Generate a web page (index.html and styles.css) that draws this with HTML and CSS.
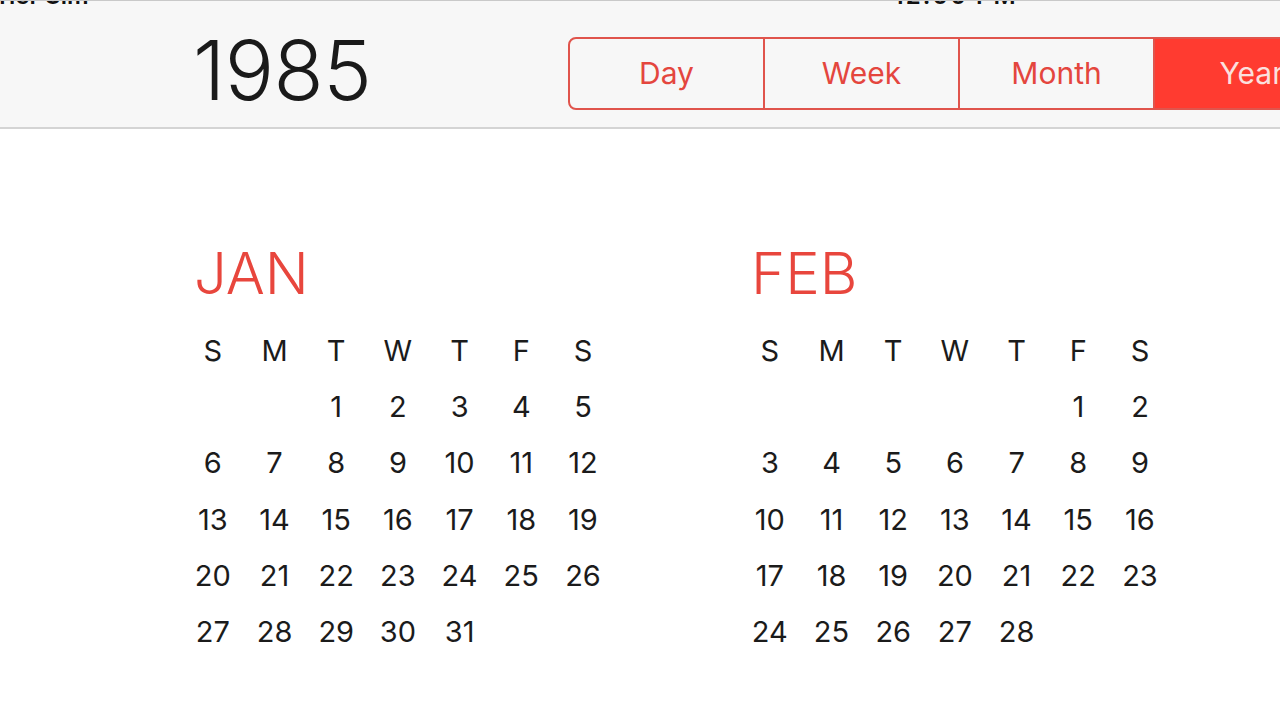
FILE: index.html
```html
<!DOCTYPE html>
<html>
<head>
<meta charset="utf-8">
<link rel="stylesheet" href="styles.css">
</head>
<body>
<div class="screen">
  <header class="topbar">
    <div class="status">
      <span class="status-left">Carrier Sim</span>
      <span class="status-time">12:00 PM</span>
    </div>
    <div class="toolbar">
      <div class="year">1985</div>
      <div class="segmented">
        <div class="seg">Day</div>
        <div class="seg">Week</div>
        <div class="seg">Month</div>
        <div class="seg active">Year</div>
      </div>
    </div>
  </header>
  <main class="months">
    <section class="month">
      <h2 class="month-name">JAN</h2>
      <div class="grid">
        <span class="wd">S</span><span class="wd">M</span><span class="wd">T</span><span class="wd">W</span><span class="wd">T</span><span class="wd">F</span><span class="wd">S</span>
        <span></span><span></span><span>1</span><span>2</span><span>3</span><span>4</span><span>5</span>
        <span>6</span><span>7</span><span>8</span><span>9</span><span>10</span><span>11</span><span>12</span>
        <span>13</span><span>14</span><span>15</span><span>16</span><span>17</span><span>18</span><span>19</span>
        <span>20</span><span>21</span><span>22</span><span>23</span><span>24</span><span>25</span><span>26</span>
        <span>27</span><span>28</span><span>29</span><span>30</span><span>31</span>
      </div>
    </section>
    <section class="month">
      <h2 class="month-name">FEB</h2>
      <div class="grid">
        <span class="wd">S</span><span class="wd">M</span><span class="wd">T</span><span class="wd">W</span><span class="wd">T</span><span class="wd">F</span><span class="wd">S</span>
        <span></span><span></span><span></span><span></span><span></span><span>1</span><span>2</span>
        <span>3</span><span>4</span><span>5</span><span>6</span><span>7</span><span>8</span><span>9</span>
        <span>10</span><span>11</span><span>12</span><span>13</span><span>14</span><span>15</span><span>16</span>
        <span>17</span><span>18</span><span>19</span><span>20</span><span>21</span><span>22</span><span>23</span>
        <span>24</span><span>25</span><span>26</span><span>27</span><span>28</span>
      </div>
    </section>
  </main>
</div>
</body>
</html>
```

FILE: styles.css
```css
html, body {
  margin: 0;
  padding: 0;
  background: #ffffff;
}

body {
  font-family: Inter, "Noto Sans", "Liberation Sans", sans-serif;
  color: #161616;
  overflow: hidden;
}

.screen {
  width: 1280px;
  height: 720px;
  overflow: hidden;
}

.topbar {
  background: #f7f7f7;
  border-top: 1px solid #c9c9c9;
  border-bottom: 2px solid #d4d4d4;
  box-sizing: border-box;
  height: 129px;
}

.status {
  height: 4px;
  display: flex;
  align-items: flex-end;
  overflow: hidden;
}

.status-left,
.status-time {
  font-size: 24px;
  font-weight: 600;
  line-height: 24px;
  margin-bottom: -3px;
  color: #111;
  white-space: nowrap;
  flex: none;
}

.status-left {
  margin-left: -42px;
}

.status-time {
  margin-left: 805px;
  letter-spacing: 2px;
}

.toolbar {
  display: flex;
  align-items: center;
  height: 122px;
  padding-left: 193px;
}

.year {
  font-size: 82px;
  font-weight: 300;
  letter-spacing: -0.5px;
  line-height: 1;
  color: #1a1a1a;
  width: 375px;
  flex: none;
  margin-top: 10px;
}

.segmented {
  display: flex;
  flex: none;
  height: 73px;
  border: 2px solid #e0544c;
  border-radius: 8px;
  box-sizing: border-box;
  overflow: hidden;
  margin-top: 14px;
}

.seg {
  width: 195px;
  display: flex;
  align-items: center;
  justify-content: center;
  font-size: 30px;
  color: #e4463e;
  border-left: 2px solid #e0544c;
  box-sizing: border-box;
}

.seg:first-child {
  border-left: none;
  width: 193px;
}

.seg.active {
  background: #ff3b30;
  color: #fbe0de;
}

.months {
  display: flex;
  padding-left: 182px;
  padding-top: 108px;
}

.month {
  width: 557px;
  flex: none;
}

.month-name {
  margin: 0 0 0 12px;
  font-size: 58px;
  font-weight: 300;
  line-height: 72px;
  color: #e8463d;
  letter-spacing: 0;
}

.grid {
  display: grid;
  grid-template-columns: repeat(7, 61.7px);
  grid-auto-rows: 56.3px;
  margin-top: 13px;
  font-size: 29px;
  font-weight: 400;
}

.grid span {
  display: flex;
  align-items: center;
  justify-content: center;
  color: #1b1b1b;
}
```
